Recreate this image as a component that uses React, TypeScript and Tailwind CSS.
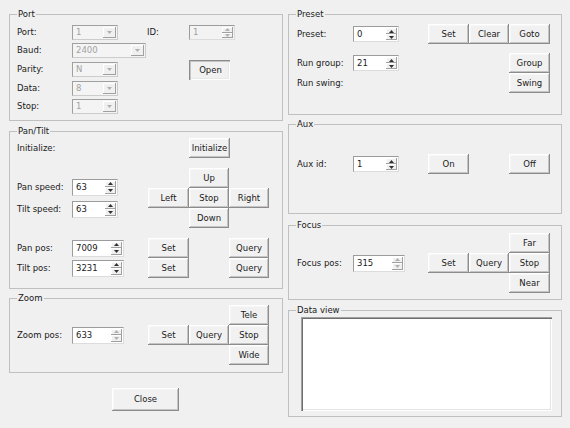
import type { ReactNode } from "react";

/* ── bevel styles ── */
const raised =
  "bg-[#f1f1f1] shadow-[inset_-1px_-1px_#8c8c8c,inset_1px_1px_#ffffff,inset_-2px_-2px_#c4c4c4,inset_2px_2px_#f7f7f7]";
const pressed =
  "bg-[#f1f1f1] shadow-[inset_1px_1px_#8c8c8c,inset_2px_2px_#c4c4c4,inset_-1px_-1px_#ffffff,inset_-2px_-2px_#e8e8e8]";
const miniRaised =
  "bg-[#f0f0f0] shadow-[inset_-1px_-1px_#a0a0a0,inset_1px_1px_#ffffff]";
const sunken =
  "bg-white shadow-[inset_1px_1px_#a0a0a0,inset_2px_2px_#6f6f6f,inset_-1px_-1px_#ffffff,inset_-2px_-2px_#e3e3e3]";

function Arrow({ up, dim }: { up?: boolean; dim?: boolean }) {
  return (
    <svg width="5" height="3" viewBox="0 0 5 3">
      <path d={up ? "M0 3L2.5 0L5 3Z" : "M0 0L2.5 3L5 0Z"} fill={dim ? "#b0b0b0" : "#303030"} />
    </svg>
  );
}

function Btn({ label, className = "", down = false }: { label: string; className?: string; down?: boolean }) {
  return (
    <div className={`flex shrink-0 items-center justify-center ${down ? pressed : raised} ${className}`}>
      <span className={down ? "translate-x-[1px] translate-y-[1px]" : ""}>{label}</span>
    </div>
  );
}

function Spin({
  value,
  className = "",
  disabled = false,
  dim = false,
}: {
  value: string;
  className?: string;
  disabled?: boolean;
  dim?: boolean;
}) {
  return (
    <div
      className={`flex shrink-0 border border-t-[#9c9c9c] border-l-[#9c9c9c] border-r-[#dcdcdc] border-b-[#dcdcdc] ${
        disabled ? "bg-[#f3f3f3] text-[#a0a0a0]" : "bg-white text-[#1a1a1a]"
      } ${className}`}
    >
      <div className="flex flex-1 items-center pl-[3px]">{value}</div>
      <div className="my-[1px] mr-[1px] flex w-[11px] flex-col">
        <div className={`flex flex-1 items-center justify-center ${miniRaised}`}>
          <Arrow up dim={disabled || dim} />
        </div>
        <div className={`flex flex-1 items-center justify-center ${miniRaised}`}>
          <Arrow dim={disabled || dim} />
        </div>
      </div>
    </div>
  );
}

function Combo({ value, className = "" }: { value: string; className?: string }) {
  return (
    <div
      className={`flex shrink-0 border border-t-[#a0a0a0] border-l-[#a0a0a0] border-r-[#cccccc] border-b-[#cccccc] bg-[#f4f4f4] text-[#a3a3a3] ${className}`}
    >
      <div className="flex flex-1 items-center pl-[3px]">{value}</div>
      <div className={`m-[1px] flex w-[13px] items-center justify-center ${miniRaised}`}>
        <Arrow dim />
      </div>
    </div>
  );
}

function Group({ title, className = "", children }: { title: string; className?: string; children?: ReactNode }) {
  return (
    <div className={`relative shrink-0 border border-[#c0c0c0] ${className}`}>
      <span className="absolute left-[7px] top-[-6px] bg-[#f0f0f0] px-[1px] leading-[11px]">{title}</span>
      {children}
    </div>
  );
}

/* ── Left column ── */
function PortGroup() {
  return (
    <Group title="Port" className="h-[107px] pl-[7px] pt-[9px]">
      <div className="grid grid-cols-[55px_75px_42px_60px] grid-rows-[17px_19px_19px_18px_18px] items-center">
        <span>Port:</span>
        <Combo value="1" className="h-[15px] w-[46px]" />
        <span>ID:</span>
        <Spin value="1" disabled className="h-[15px] w-[46px]" />

        <span>Baud:</span>
        <Combo value="2400" className="h-[15px] w-[74px]" />
        <div />
        <div />

        <span>Parity:</span>
        <Combo value="N" className="h-[15px] w-[46px]" />
        <div />
        <Btn label="Open" down className="h-[20px] w-[41px]" />

        <span>Data:</span>
        <Combo value="8" className="h-[15px] w-[46px]" />
        <div />
        <div />

        <span>Stop:</span>
        <Combo value="1" className="h-[15px] w-[46px]" />
        <div />
        <div />
      </div>
    </Group>
  );
}

function PanTiltGroup() {
  return (
    <Group title="Pan/Tilt" className="mt-[10px] h-[158px] pl-[7px] pt-[6px]">
      <div className="flex h-[20px] items-center">
        <span className="w-[172px]">Initialize:</span>
        <Btn label="Initialize" className="h-[20px] w-[41px]" />
      </div>

      <div className="mt-[10px] flex">
        <div className="flex w-[131px] flex-col justify-center gap-[2px]">
          <div className="flex h-[20px] items-center">
            <span className="w-[55px]">Pan speed:</span>
            <Spin value="63" className="h-[17px] w-[46px]" />
          </div>
          <div className="flex h-[20px] items-center">
            <span className="w-[55px]">Tilt speed:</span>
            <Spin value="63" className="h-[17px] w-[46px]" />
          </div>
        </div>
        <div className="grid grid-cols-[41px_40px_40px] grid-rows-[20px_20px_20px]">
          <div />
          <Btn label="Up" />
          <div />
          <Btn label="Left" />
          <Btn label="Stop" />
          <Btn label="Right" />
          <div />
          <Btn label="Down" />
          <div />
        </div>
      </div>

      <div className="mt-[10px] flex flex-col">
        <div className="flex h-[20px] items-center">
          <span className="w-[55px]">Pan pos:</span>
          <div className="w-[76px]">
            <Spin value="7009" className="h-[17px] w-[52px]" />
          </div>
          <Btn label="Set" className="h-[20px] w-[41px]" />
          <div className="w-[40px]" />
          <Btn label="Query" className="h-[20px] w-[40px]" />
        </div>
        <div className="flex h-[20px] items-center">
          <span className="w-[55px]">Tilt pos:</span>
          <div className="w-[76px]">
            <Spin value="3231" className="h-[17px] w-[52px]" />
          </div>
          <Btn label="Set" className="h-[20px] w-[41px]" />
          <div className="w-[40px]" />
          <Btn label="Query" className="h-[20px] w-[40px]" />
        </div>
      </div>
    </Group>
  );
}

function ZoomGroup() {
  return (
    <Group title="Zoom" className="mt-[9px] h-[75px] pl-[7px] pt-[6px]">
      <div className="flex items-center">
        <span className="w-[55px]">Zoom pos:</span>
        <div className="w-[76px]">
          <Spin value="633" dim className="h-[17px] w-[52px]" />
        </div>
        <Btn label="Set" className="h-[20px] w-[41px]" />
        <Btn label="Query" className="h-[20px] w-[40px]" />
        <div className="flex flex-col">
          <Btn label="Tele" className="h-[20px] w-[40px]" />
          <Btn label="Stop" className="h-[20px] w-[40px]" />
          <Btn label="Wide" className="h-[20px] w-[40px]" />
        </div>
      </div>
    </Group>
  );
}

/* ── Right column ── */
function PresetGroup() {
  return (
    <Group title="Preset" className="h-[101px] pl-[8px] pt-[9px]">
      <div className="flex h-[20px] items-center">
        <span className="w-[56px]">Preset:</span>
        <div className="w-[75px]">
          <Spin value="0" className="h-[16px] w-[46px]" />
        </div>
        <Btn label="Set" className="h-[20px] w-[41px]" />
        <Btn label="Clear" className="h-[20px] w-[40px]" />
        <Btn label="Goto" className="h-[20px] w-[41px]" />
      </div>
      <div className="mt-[9px] flex h-[20px] items-center">
        <span className="w-[56px]">Run group:</span>
        <div className="w-[156px]">
          <Spin value="21" className="h-[16px] w-[46px]" />
        </div>
        <Btn label="Group" className="h-[20px] w-[41px]" />
      </div>
      <div className="flex h-[20px] items-center">
        <span className="w-[212px]">Run swing:</span>
        <Btn label="Swing" className="h-[20px] w-[41px]" />
      </div>
    </Group>
  );
}

function AuxGroup() {
  return (
    <Group title="Aux" className="mt-[9px] h-[90px] pl-[8px] pt-[29px]">
      <div className="flex h-[20px] items-center">
        <span className="w-[56px]">Aux id:</span>
        <div className="w-[75px]">
          <Spin value="1" className="h-[16px] w-[46px]" />
        </div>
        <Btn label="On" className="h-[20px] w-[41px]" />
        <div className="w-[40px]" />
        <Btn label="Off" className="h-[20px] w-[41px]" />
      </div>
    </Group>
  );
}

function FocusGroup() {
  return (
    <Group title="Focus" className="mt-[11px] h-[75px] pl-[8px] pt-[7px]">
      <div className="flex items-center">
        <span className="w-[56px]">Focus pos:</span>
        <div className="w-[75px]">
          <Spin value="315" dim className="h-[17px] w-[52px]" />
        </div>
        <Btn label="Set" className="h-[20px] w-[41px]" />
        <Btn label="Query" className="h-[20px] w-[40px]" />
        <div className="flex flex-col">
          <Btn label="Far" className="h-[20px] w-[41px]" />
          <Btn label="Stop" className="h-[20px] w-[41px]" />
          <Btn label="Near" className="h-[20px] w-[41px]" />
        </div>
      </div>
    </Group>
  );
}

function DataViewGroup() {
  return (
    <Group title="Data view" className="mt-[10px] h-[107px] pl-[12px] pt-[6px]">
      <div className={`h-[94px] w-[251px] ${sunken}`} />
    </Group>
  );
}

export default function App() {
  return (
    <div className="flex h-[428px] w-[570px] gap-[5px] overflow-hidden bg-[#f0f0f0] pl-[9px] pt-[14px] font-['DejaVu_Sans',sans-serif] text-[8.5px] leading-none text-[#1a1a1a]">
      <div className="flex w-[274px] flex-col">
        <PortGroup />
        <PanTiltGroup />
        <ZoomGroup />
        <Btn label="Close" className="ml-[103px] mt-[15px] h-[23px] w-[67px]" />
      </div>
      <div className="flex w-[274px] flex-col">
        <PresetGroup />
        <AuxGroup />
        <FocusGroup />
        <DataViewGroup />
      </div>
    </div>
  );
}
